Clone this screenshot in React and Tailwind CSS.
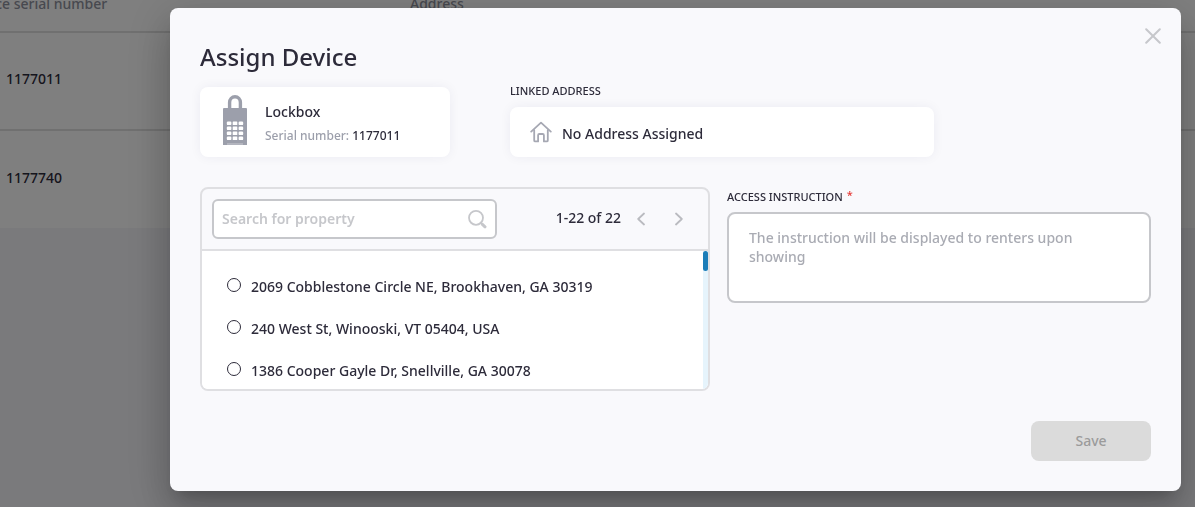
const devices = [
  { serial: "1177011" },
  { serial: "1177740" },
];

const properties = [
  "2069 Cobblestone Circle NE, Brookhaven, GA 30319",
  "240 West St, Winooski, VT 05404, USA",
  "1386 Cooper Gayle Dr, Snellville, GA 30078",
];

function LockboxIcon() {
  const rows = [26.5, 31.5, 36.5, 41.5];
  return (
    <svg className="mb-1 h-[50px] w-6 shrink-0" viewBox="0 0 24 50" aria-hidden="true">
      <path d="M6.6 14V7.6a5.4 5.9 0 0 1 10.8 0V14" fill="none" stroke="#9c9fab" strokeWidth="3.4" />
      <path d="M1 13h22a1 1 0 0 1 1 1v36H0V14a1 1 0 0 1 1-1z" fill="#9c9fab" />
      {rows.map((y) => (
        <g key={y} fill="#fff">
          <rect x="3.8" y={y} width="4.6" height="3.6" rx="1.2" />
          <rect x="9.7" y={y} width="4.6" height="3.6" rx="0.6" />
          <rect x="15.6" y={y} width="4.6" height="3.6" rx="1.2" />
        </g>
      ))}
      <path d="M4 49h16" stroke="#d5d6dc" strokeWidth="0.8" />
    </svg>
  );
}

function HomeIcon() {
  return (
    <svg className="h-[22px] w-[22px] shrink-0" viewBox="0 0 22 22" fill="none" stroke="#a6a8b3" strokeWidth="1.8" strokeLinecap="round" strokeLinejoin="round" aria-hidden="true">
      <path d="M1.2 10.6 11 1.6l9.8 9" />
      <path d="M4.2 9.2v10.2q0 1 1 1h2.9v-6.2q0-1.2 1.2-1.2h3.4q1.2 0 1.2 1.2v6.2h2.9q1 0 1-1V9.2" />
    </svg>
  );
}

function SearchIcon() {
  return (
    <svg className="h-5 w-5 shrink-0" viewBox="0 0 20 20" fill="none" stroke="#c6c7cb" strokeLinecap="round" aria-hidden="true">
      <circle cx="9" cy="8.8" r="7" strokeWidth="1.8" />
      <path d="m13.8 13.6 1.6 1.5" strokeWidth="1.8" />
      <path d="m15.4 15.4 2.6 2.4" strokeWidth="3" />
    </svg>
  );
}

function Chevron({ d }) {
  return (
    <svg className="h-3.5 w-2" viewBox="0 0 8 14" fill="none" stroke="#babbc0" strokeWidth="1.8" strokeLinecap="round" strokeLinejoin="round" aria-hidden="true">
      <path d={d} />
    </svg>
  );
}

function DeviceTable() {
  return (
    <div className="min-h-screen overflow-hidden bg-[#f4f4f9]">
      <table className="-mt-4 -ml-10 w-[calc(100%+40px)] table-fixed border-collapse bg-white text-left text-sm text-[#2d2b3a]">
        <thead>
          <tr className="h-12 border-b-2 border-[#e0e0e0] text-[#8f929e]">
            <th className="w-[450px] p-0 pb-2 pl-1.5 font-medium">Device serial number</th>
            <th className="p-0 pb-2 font-medium">Address</th>
          </tr>
        </thead>
        <tbody>
          {devices.map((device) => (
            <tr key={device.serial} className="h-[98px] border-b-2 border-[#e0e0e0] last:border-b-0">
              <td className="p-0 pb-1 pl-[46px] font-medium">{device.serial}</td>
              <td className="p-0" />
            </tr>
          ))}
        </tbody>
      </table>
    </div>
  );
}

function DeviceCard() {
  return (
    <div className="mt-3.5 flex h-[70px] items-center gap-[18px] rounded-lg bg-white pl-[23px] shadow-[0_0_12px_rgba(40,40,80,0.06)]">
      <LockboxIcon />
      <div className="flex flex-col gap-1 pt-1">
        <p className="text-sm leading-5 font-medium">Lockbox</p>
        <p className="text-xs leading-5 font-medium text-[#9c9fab]">
          Serial number: <span className="text-[#2d2b3a]">1177011</span>
        </p>
      </div>
    </div>
  );
}

function PropertyPicker() {
  return (
    <section aria-label="Properties" className="min-w-0 flex-1 overflow-hidden rounded-lg border-2 border-[#dfdfe2]">
      <div className="flex h-[60px] items-center px-2.5">
        <label className="flex h-10 w-[285px] items-center rounded-md border-2 border-[#c6c7cb] bg-white px-2">
          <input
            type="text"
            aria-label="Search for property"
            placeholder="Search for property"
            className="min-w-0 flex-1 bg-transparent text-sm font-semibold outline-none placeholder:text-[#c6c7cb]"
          />
          <SearchIcon />
        </label>
        <div className="ml-auto flex items-center pr-[15px]">
          <span className="mr-4 pb-0.5 text-sm font-medium">1-22 of 22</span>
          <button type="button" aria-label="Previous page" className="mr-[30px]">
            <Chevron d="M7 1.5 1.2 7 7 12.5" />
          </button>
          <button type="button" aria-label="Next page">
            <Chevron d="M1 1.5 6.8 7 1 12.5" />
          </button>
        </div>
      </div>
      <div className="flex border-t-2 border-[#dfdfe2] bg-white">
        <ul className="h-[138px] min-w-0 flex-1 overflow-hidden pt-[15px] pl-[25px]">
          {properties.map((address) => (
            <li key={address}>
              <label className="flex h-[42px] items-center gap-2.5 text-sm font-medium whitespace-nowrap">
                <input
                  type="radio"
                  name="property"
                  className="mb-1 size-3.5 shrink-0 appearance-none rounded-full border border-[#2d2b3a] bg-white checked:border-4"
                />
                {address}
              </label>
            </li>
          ))}
        </ul>
        <div className="w-[5px] bg-[#e6f4fc]">
          <div className="h-5 rounded-full bg-[#1b7db8]" />
        </div>
      </div>
    </section>
  );
}

export default function App() {
  return (
    <div className="font-['Noto_Sans',sans-serif] text-[#2d2b3a]">
      <DeviceTable />
      <div className="fixed inset-0 overflow-hidden bg-black/50 pt-2 pr-3.5 pl-[170px]">
        <div
          role="dialog"
          aria-modal="true"
          aria-labelledby="dialog-title"
          className="relative rounded-lg bg-[#f9f9fc] px-[30px] pt-[33px] pb-[30px] shadow-[0_11px_15px_-7px_rgba(0,0,0,0.2),0_24px_38px_3px_rgba(0,0,0,0.14),0_9px_46px_8px_rgba(0,0,0,0.12)]"
        >
          <button type="button" aria-label="Close" className="absolute top-5 right-5">
            <svg className="size-4" viewBox="0 0 16 16" stroke="#c6c7cb" strokeWidth="2" strokeLinecap="round" aria-hidden="true">
              <path d="m1.2 1.2 13.6 13.6M14.8 1.2 1.2 14.8" />
            </svg>
          </button>

          <div className="flex items-end gap-[60px]">
            <div className="w-[250px]">
              <h1 id="dialog-title" className="text-2xl leading-8 font-medium">Assign Device</h1>
              <DeviceCard />
            </div>
            <div className="w-[424px]">
              <h2 className="text-[11px] leading-4 font-medium">LINKED ADDRESS</h2>
              <div className="mt-2 flex h-[50px] items-center gap-2.5 rounded-lg bg-white pl-5 shadow-[0_0_12px_rgba(40,40,80,0.06)]">
                <HomeIcon />
                <p className="pt-1 text-sm font-medium">No Address Assigned</p>
              </div>
            </div>
          </div>

          <div className="mt-[30px] flex items-start gap-[17px]">
            <PropertyPicker />
            <div className="w-[424px]">
              <label htmlFor="access" className="flex gap-1 pt-0.5 text-[11px] leading-4 font-medium">
                ACCESS INSTRUCTION <span className="leading-3 text-[#e53935]">*</span>
              </label>
              <textarea
                id="access"
                placeholder="The instruction will be displayed to renters upon showing"
                className="mt-[7px] block h-[91px] w-full resize-none rounded-lg border-2 border-[#c6c7cb] bg-white py-3.5 pr-12 pl-5 text-sm leading-[19px] font-medium outline-none placeholder:text-[#a9abb3]"
              />
            </div>
          </div>

          <div className="mt-[30px] flex justify-end">
            <button type="submit" disabled className="h-10 w-[120px] rounded-lg bg-[#dbdbdb] text-sm font-medium text-[#9b9b9b]">
              Save
            </button>
          </div>
        </div>
      </div>
    </div>
  );
}
